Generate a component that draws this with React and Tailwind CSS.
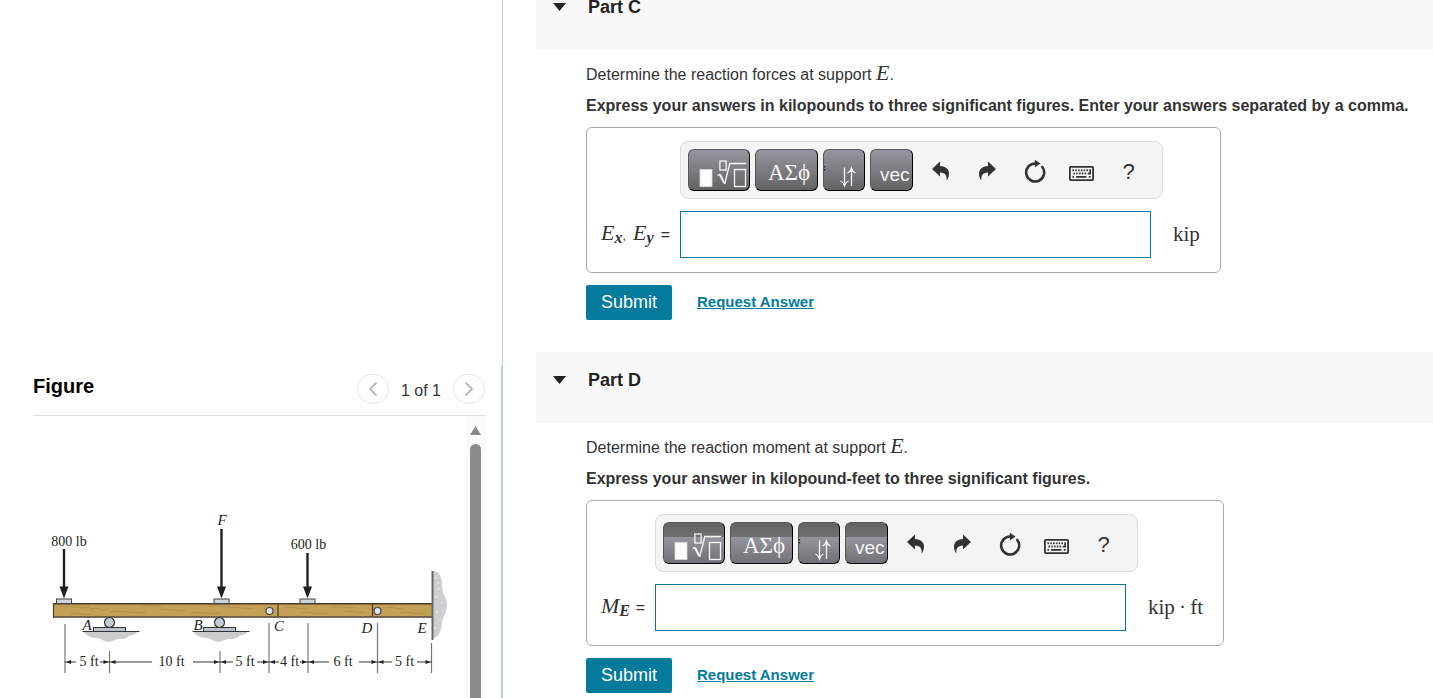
import React from "react";
import { ChevronLeft, ChevronRight } from "lucide-react";

const FACES = {
  plain: "bg-[linear-gradient(#97959f,#636363)]",
  banded: "bg-[linear-gradient(#636363,#6f6f6f_34%,#97959f_34%,#727176)]",
};

function PaletteButton({ label, width, face, children }) {
  return (
    <button
      type="button"
      aria-label={label}
      className={`${width} ${face} h-[42px] shrink-0 overflow-hidden rounded-md border border-t-[#555] border-r-black border-b-black border-l-[#555] text-left whitespace-nowrap text-[#f7f7f7]`}
    >
      {children}
    </button>
  );
}

function IconButton({ label, children }) {
  return (
    <button type="button" aria-label={label} className="flex h-11 w-[47px] items-center justify-center text-[#333]">
      {children}
    </button>
  );
}

const BACK_ARROW = "M0 8 8 .5v4.400C14 5 17 8.500 17 12.600c0 2.600-.8 4.800-2.400 7.100.5-5-1.200-8-6.600-8.200V15.500Z";

function KeyboardIcon() {
  const keys = [];
  for (let i = 0; i < 6; i++) {
    keys.push(<rect key={`a${i}`} x={3.4 + i * 2.8} y="3.4" width="1.6" height="1.8" />);
    if (i < 5) keys.push(<rect key={`b${i}`} x={4.4 + i * 2.8} y="6.6" width="1.6" height="1.8" />);
  }
  return (
    <svg width="25" height="15" viewBox="0 0 25 15" fill="currentColor" className="mt-[5px]">
      <rect x=".9" y=".9" width="23.2" height="13.2" rx=".8" fill="none" stroke="currentColor" strokeWidth="1.8" />
      {keys}
      <path d="M20.300 3.300H22v5.100h-3.200V6.800h1.500zM3.400 10h1.600v1.700H3.400zM7 10h10.500v1.700H7zM19.800 10h1.800v1.700h-1.800z" />
    </svg>
  );
}

function Toolbar({ face }) {
  return (
    <div className="flex h-[58px] w-[483px] items-start rounded-lg border border-[#dcdcdc] bg-[#f4f4f4] p-[7px]">
      <div className="flex gap-[5px] pr-1">
        <PaletteButton label="Templates" width="w-[62px]" face={face}>
          <svg width="60" height="40" viewBox="1 1 60 40" fill="none" stroke="#f7f7f7" strokeWidth="1.3" className="block">
            <rect x="12" y="20.500" width="12" height="17" fill="#fff" stroke="#ddd" strokeWidth=".8" />
            <rect x="31.900" y="12" width="6.200" height="9" />
            <path d="m29.500 26.500 2.500-1.200" />
            <path d="m32 25.500 4.200 8.600" strokeWidth="2" />
            <path d="m36.600 35 5.200-20.500h16.400" />
            <rect x="46.500" y="20.500" width="11" height="17" />
          </svg>
        </PaletteButton>
        <PaletteButton label="Greek letters" width="w-[63px]" face={face}>
          <span className="block pt-[6px] pl-3 font-['Liberation_Serif',serif] text-[23px] leading-[34px]">ΑΣϕ</span>
        </PaletteButton>
        <PaletteButton label="Arrows" width="w-[42px]" face={face}>
          <svg width="40" height="40" viewBox="1 1 40 40" fill="none" stroke="#f7f7f7" strokeWidth="1.3" className="block">
            <path d="M21.500 18.500v18M17.500 32c2 .8 3.200 2.200 4 4.800.8-2.600 2-4 4-4.800M28.500 37V19.500M24.500 24c2-.8 3.200-2.200 4-4.800.8 2.600 2 4 4 4.800" />
            <path d="M1.500 17v1.500M1.500 20v1.500" stroke="#222" />
          </svg>
        </PaletteButton>
        <PaletteButton label="Vectors" width="w-[43px]" face={face}>
          <span className="block pt-[9px] pl-[9px] text-[19px] leading-[32px]">vec</span>
        </PaletteButton>
      </div>
      <IconButton label="Undo">
        <svg width="17" height="20" viewBox="0 0 17 20" fill="currentColor"><path d={BACK_ARROW} /></svg>
      </IconButton>
      <IconButton label="Redo">
        <svg width="17" height="20" viewBox="0 0 17 20" fill="currentColor">
          <path d={BACK_ARROW} transform="matrix(-1 0 0 1 17 0)" />
        </svg>
      </IconButton>
      <IconButton label="Reset">
        <svg width="22" height="24" viewBox="0 0 22 24">
          <path d="M11.500 4.500A9 9 0 1 0 18.300 8" fill="none" stroke="currentColor" strokeWidth="2.600" strokeLinecap="round" />
          <path d="M10.800.8 16.500 4.600 10.800 8.600Z" fill="currentColor" />
        </svg>
      </IconButton>
      <IconButton label="Keyboard shortcuts">
        <KeyboardIcon />
      </IconButton>
      <IconButton label="Help">
        <span className="text-[22px]">?</span>
      </IconButton>
    </div>
  );
}

function MathText({ children }) {
  return <i className="font-['Liberation_Serif',serif] text-[22px] leading-none">{children}</i>;
}

function Sub({ children }) {
  return <sub className="bottom-[-3px] text-base font-bold">{children}</sub>;
}

function Part({ title, id, question, instruction, label, labelWidth, unit, face }) {
  return (
    <section>
      <h2 className="bg-[#f8f8f8] pt-4 pb-[31px] pl-[17px] text-lg leading-6 font-bold text-[#222]">
        <button type="button" aria-expanded="true" className="flex items-center gap-[22px]">
          <svg width="13" height="8" viewBox="0 0 13 8" fill="currentColor"><path d="M0 0h13L6.500 8Z" /></svg>
          {title}
        </button>
      </h2>
      <div className="pt-3 pb-8 pl-[50px]">
        <p className="h-6 text-base whitespace-nowrap">
          {question} <MathText>E</MathText>.
        </p>
        <p className="mt-2 text-base leading-6 font-bold whitespace-nowrap">{instruction}</p>
        <div className="mt-[9px] grid w-fit grid-cols-[auto_auto] gap-x-[10px] gap-y-3 rounded-md border border-[#aaa] pt-[13px] pr-5 pb-[14px] pl-[14px]">
          <div className="col-start-2">
            <Toolbar face={face} />
          </div>
          <label htmlFor={id} className={`${labelWidth} flex items-baseline justify-between self-center whitespace-nowrap`}>{label}</label>
          <div className="flex items-center gap-[22px]">
            <input id={id} type="text" className="h-[47px] w-[471px] border border-[#047a9c] bg-white px-2 outline-none" />
            <span className="font-['Liberation_Serif',serif] text-[21px] whitespace-nowrap">{unit}</span>
          </div>
        </div>
        <div className="mt-3 flex items-center gap-[25px]">
          <button type="button" className="h-[35px] w-[86px] rounded-xs bg-[#047a9c] pb-[2px] text-lg text-white">Submit</button>
          <a href="#request" className="text-[15px] font-bold text-[#047a9c] underline">Request Answer</a>
        </div>
      </div>
    </section>
  );
}

function Load({ x, top }) {
  return (
    <g>
      <path d={`M${x} ${top}V588`} stroke="#231f20" strokeWidth="2.4" />
      <path d={`M${x - 4.5} 586.500h9L${x} 598.500Z`} fill="#231f20" />
      <rect x={x - 7.5} y="599" width="15" height="4.500" fill="#cfd4d8" stroke="#444" />
    </g>
  );
}

function Roller({ x }) {
  return (
    <g>
      <path d={`M${x - 26} 631.500h54c-2 5-7 2-10 6-5 3-9 0-14 3-6 3-10 0-14-2-6-1-13-1-16-7Z`} fill="#ccc" />
      <path d={`M${x - 27} 631.500h57`} stroke="#333" />
      <rect x={x - 16} y="627.500" width="32" height="4" fill="#b9c2ca" stroke="#333" />
      <circle cx={x} cy="622.500" r="5" fill="#c3ccd4" stroke="#333" strokeWidth="1.200" />
    </g>
  );
}

const GRAIN = [[60, 607, 30], [110, 612, 36], [140, 606, 24], [190, 613, 30], [228, 608, 26], [70, 614, 22], [160, 610, 26], [285, 608, 24], [300, 613, 28], [330, 607, 26], [345, 612, 20], [385, 608, 20], [400, 613, 24], [90, 609, 18], [210, 606, 20]];
const TICKS = [[65, 624], [109.5, 651], [220, 651], [269, 623], [308, 623], [377.5, 623], [431.5, 643]];
const SPANS = [
  [65, 76, 100, 109.5, "5 ft", 89],
  [109.5, 152, 193, 220, "10 ft", 171.5],
  [220, 233, 257, 269, "5 ft", 245],
  [269, 279, 300, 308, "4 ft", 289.5],
  [308, 329, 359, 377.5, "6 ft", 343],
  [377.5, 392, 417, 431.5, "5 ft", 404.5],
];

function BeamFigure() {
  return (
    <svg
      viewBox="33 416 433 282"
      width="433"
      height="282"
      role="img"
      aria-label="Compound beam with loads and supports"
      className="shrink-0 font-['Liberation_Serif',serif]"
      fontSize="14"
      fill="#231f20"
    >
      <path d="M433 571c6 0 9 6 9 14 0 9 5 13 5 20s-4 11-5 18c-1 9-4 15-9 15Z" fill="#cdcfd1" />
      <g fill="#f4f4f4">
        {[[436, 578], [439, 589], [436, 597], [442, 603], [437, 612], [440, 620], [435, 628], [443, 611], [438, 583]].map(([x, y]) => (
          <circle key={`${x}-${y}`} cx={x} cy={y} r=".7" />
        ))}
      </g>
      <rect x="53.500" y="604" width="379" height="12.500" fill="#c4a056" />
      <g stroke="#b18c48" strokeWidth=".8" fill="none">
        {GRAIN.map(([x, y, w]) => (
          <path key={`${x}-${y}`} d={`M${x} ${y}q${w / 4} -1.500 ${w / 2} 0t${w / 2} 0`} />
        ))}
      </g>
      <path d="M53 603.700h380" stroke="#4a3d28" strokeWidth="1.500" />
      <path d="M53 617h380" stroke="#4a3d28" strokeWidth="1.500" />
      <path d="M53.500 603v14.500M278 604v12.500M372.500 604v12.500" stroke="#4a3d28" strokeWidth="1.200" />
      <path d="M432.500 571v69" stroke="#666" strokeWidth="2" />
      {[269.5, 377.5].map((x) => (
        <circle key={x} cx={x} cy="611" r="3.500" fill="#dfe5ec" stroke="#444" strokeWidth="1.200" />
      ))}
      <Load x={64} top={549} />
      <Load x={221.5} top={529} />
      <Load x={307.5} top={553} />
      <Roller x={109.5} />
      <Roller x={219.5} />
      {TICKS.map(([x, y]) => (
        <path key={x} d={`M${x} ${y}V673`} stroke="#777" strokeWidth="1.200" />
      ))}
      {SPANS.map(([a, b, c, d, text, mid]) => (
        <g key={a}>
          <path d={`M${a} 662H${b}M${c} 662H${d}`} stroke="#333" />
          <path d={`M${a + 1} 662l5-2v4ZM${d - 1} 662l-5-2v4Z`} />
          <text x={mid} y="666" textAnchor="middle">{text}</text>
        </g>
      ))}
      <text x="69" y="546" textAnchor="middle">800 lb</text>
      <text x="308.500" y="549" textAnchor="middle">600 lb</text>
      <g fontStyle="italic" fontSize="15" textAnchor="middle">
        <text x="222" y="525">F</text>
        <text x="87" y="630">A</text>
        <text x="198" y="630">B</text>
        <text x="279" y="631">C</text>
        <text x="367" y="633">D</text>
        <text x="422" y="633">E</text>
      </g>
    </svg>
  );
}

const PAGER = "flex h-[30px] w-8 items-center justify-center rounded-full border border-[#e4e4e4] text-[#bbb]";

export default function App() {
  return (
    <div className="flex h-screen overflow-hidden bg-white font-['Liberation_Sans',Arial,sans-serif] text-[#333]">
      <aside className="flex w-[503px] shrink-0 flex-col">
        <div className="h-[366px] shrink-0 border-r border-[#b8cfe0]" />
        <div className="flex min-h-0 flex-1 flex-col border-r-2 border-[#b8cfe0] pr-4 pl-[33px]">
          <header className="flex h-[50px] shrink-0 items-start justify-between border-b border-[#ddd] pt-2">
            <h2 className="text-xl leading-6 font-bold text-black">Figure</h2>
            <div className="flex items-center gap-3">
              <button type="button" aria-label="Previous figure" className={PAGER}><ChevronLeft size={24} /></button>
              <span className="pt-1 text-base">1 of 1</span>
              <button type="button" aria-label="Next figure" className={PAGER}><ChevronRight size={24} /></button>
            </div>
          </header>
          <div className="flex min-h-0 flex-1 justify-between overflow-hidden">
            <BeamFigure />
            <div className="flex w-[19px] flex-col items-center bg-[#fafafa] pt-[10px]">
              <svg width="11" height="9" viewBox="0 0 11 9" fill="#8b8b8b" className="shrink-0"><path d="M5.500 0 11 9H0Z" /></svg>
              <div className="mt-[9px] w-[11px] flex-1 rounded-t-full bg-[#8b8b8b]" />
            </div>
          </div>
        </div>
      </aside>
      <main className="min-w-0 flex-1 overflow-hidden pl-[33px]">
        <div className="-mt-[21px]">
          <Part
            title="Part C"
            id="part-c"
            question="Determine the reaction forces at support"
            instruction="Express your answers in kilopounds to three significant figures. Enter your answers separated by a comma."
            label={<><span><MathText>E<Sub>x</Sub></MathText><span className="text-xs">,</span></span><MathText>E<Sub>y</Sub></MathText><span>=</span></>}
            labelWidth="w-[69px]"
            unit="kip"
            face={FACES.plain}
          />
          <Part
            title="Part D"
            id="part-d"
            question="Determine the reaction moment at support"
            instruction="Express your answer in kilopound-feet to three significant figures."
            label={<><MathText>M<Sub>E</Sub></MathText><span>=</span></>}
            labelWidth="w-[44px]"
            unit={"kip\u2009·\u2009ft"}
            face={FACES.banded}
          />
        </div>
      </main>
    </div>
  );
}
